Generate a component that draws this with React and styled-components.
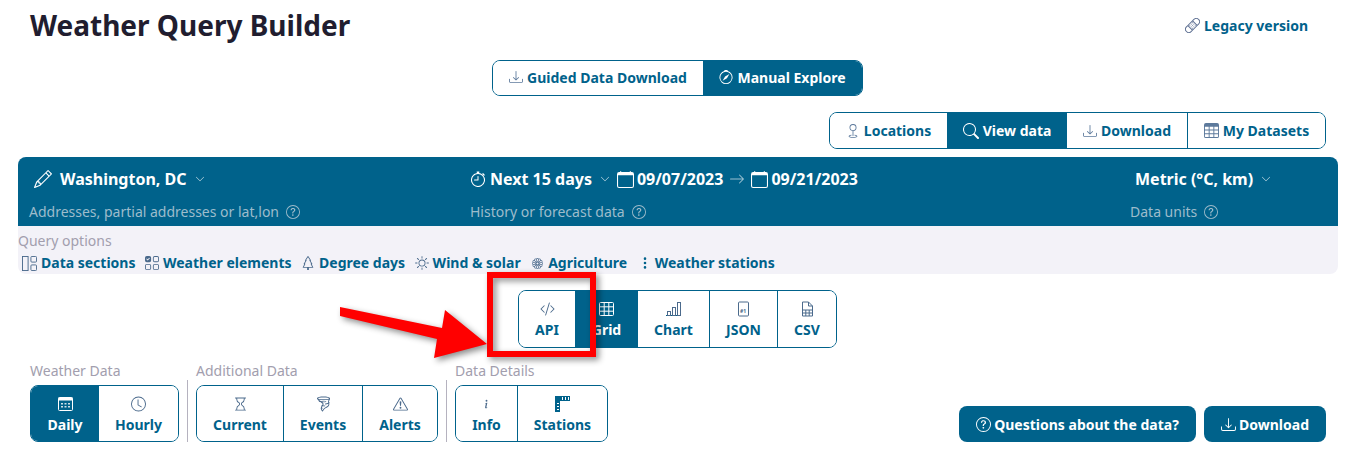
import React from "react";
import styled, { createGlobalStyle } from "styled-components";
import {
  BsBandaid, BsDownload, BsCompass, BsGeo, BsSearch, BsTable, BsPencil, BsChevronDown,
  BsStopwatch, BsCalendar, BsArrowRight, BsQuestionCircle, BsUiChecksGrid, BsTree, BsSun,
  BsFlower1, BsThreeDotsVertical, BsCodeSlash, BsClock, BsHourglass,
  BsTornado, BsExclamationTriangle, BsInfo,
} from "react-icons/bs";

const Global = createGlobalStyle`
  html, body { margin: 0; padding: 0; background: #fff; }
  body { font-family: "Noto Sans", "Open Sans", sans-serif; overflow: hidden; }
`;

const blue = "#00628b";
const iconBlue = "#4b6a8c";

const Page = styled.div`
  position: relative;
  width: 1368px;
  height: 453px;
  overflow: hidden;
  padding: 0 30px 0 18px;
  box-sizing: border-box;
`;
const Header = styled.header`
  display: flex;
  justify-content: space-between;
  align-items: center;
  height: 51px;
  padding: 0 30px 0 12px;
`;
const Title = styled.h1`
  margin: 0;
  font-size: 28px;
  line-height: 51px;
  font-weight: 700;
  color: #211d2f;
`;
const TextLink = styled.a`
  display: inline-flex;
  align-items: center;
  gap: 4px;
  font-size: 14px;
  font-weight: 700;
  color: ${blue};
  svg { font-size: 15px; color: #5d6f92; }
`;
const Row = styled.div`
  display: flex;
  justify-content: ${(p) => p.$justify || "center"};
  margin-top: ${(p) => p.$top || 0}px;
  padding-right: ${(p) => p.$right || 0}px;
`;
const Seg = styled.div`
  display: inline-flex;
  border: 1px solid ${blue};
  border-radius: 8px;
  overflow: hidden;
  background: #fff;
`;
const SegBtn = styled.button`
  display: inline-flex;
  align-items: center;
  justify-content: center;
  gap: 4px;
  box-sizing: border-box;
  width: ${(p) => p.$w}px;
  height: ${(p) => p.$h}px;
  padding: 0 0 ${(p) => p.$lift || 0}px;
  border: 0;
  border-left: ${(p) => (p.$div ? `1px solid ${blue}` : "0")};
  background: ${(p) => (p.$active ? blue : "#fff")};
  color: ${(p) => (p.$active ? "#fff" : blue)};
  font: 700 14px "Noto Sans", sans-serif;
  white-space: nowrap;
  svg { font-size: ${(p) => p.$icon || 14}px; color: ${(p) => (p.$active ? "#fff" : "#5d7a9c")}; }
`;
const Tile = styled.button`
  display: flex;
  flex-direction: column;
  align-items: center;
  gap: 3px;
  box-sizing: border-box;
  width: ${(p) => p.$w}px;
  height: ${(p) => p.$h || 55}px;
  padding: 10px 0 0;
  border: 0;
  border-left: ${(p) => (p.$div ? `1px solid ${blue}` : "0")};
  background: ${(p) => (p.$active ? blue : "#fff")};
  color: ${(p) => (p.$active ? "#fff" : blue)};
  font: 700 14px/20px "Noto Sans", sans-serif;
  svg { font-size: 15px; height: 16px; color: ${(p) => (p.$active ? "#fff" : iconBlue)}; }
`;
const Panel = styled.section`
  margin-top: 8px;
  border-radius: 8px;
  overflow: hidden;
  background: #f3f2f8;
`;
const PanelTop = styled.div`
  display: grid;
  grid-template-columns: 440px 660px 1fr;
  height: 69px;
  padding-left: 12px;
  background: ${blue};
  color: #fff;
  box-sizing: border-box;
`;
const Col = styled.div`
  display: flex;
  flex-direction: column;
`;
const Main = styled.div`
  display: flex;
  align-items: center;
  gap: 4px;
  height: 22px;
  margin-top: 11px;
  padding-left: ${(p) => p.$left || 0}px;
  font-size: 16px;
  font-weight: 700;
  white-space: nowrap;
  svg { font-size: 16px; flex: none; }
`;
const Pencil = styled(BsPencil)`
  && { font-size: 18px; margin: 0 4px 0 -1px; }
`;
const Chevron = styled(BsChevronDown)`
  && { font-size: 10px; margin: 0 ${(p) => p.$after || 0}px 0 4px; opacity: 0.85; }
`;
const Calendar = styled(BsCalendar)`
  && { font-size: 17px; margin-right: -1px; }
`;
const Arrow = styled(BsArrowRight)`
  && { opacity: 0.6; margin: 0 2px 0 2px; }
`;
const Hint = styled.div`
  display: flex;
  align-items: center;
  gap: 7px;
  margin: 12px 0 0 ${(p) => p.$shift || 0}px;
  font-size: 14px;
  line-height: 20px;
  color: #9dbccb;
  white-space: nowrap;
  svg { font-size: 14px; }
`;
const PanelBottom = styled.div`
  height: 48px;
  box-sizing: border-box;
  padding-top: 5px;
`;
const Muted = styled.div`
  font-size: 14px;
  line-height: 20px;
  color: #a29eae;
`;
const Options = styled.div`
  display: flex;
  gap: 9.5px;
  padding-left: 4px;
  margin-top: 2px;
`;
const Option = styled.span`
  display: inline-flex;
  align-items: center;
  gap: 4px;
  font-size: 14px;
  line-height: 20px;
  font-weight: 700;
  color: ${blue};
  white-space: nowrap;
  svg { font-size: 14px; color: ${iconBlue}; flex: none; }
`;
const Flower = styled(BsFlower1)`
  && { font-size: 11px; margin: 0 1px 0 2px; }
`;
const Dots = styled(BsThreeDotsVertical)`
  && { color: ${blue}; margin-left: 1px; margin-right: -1px; }
`;
const Bottom = styled.div`
  display: flex;
  align-items: flex-end;
  margin-top: 13px;
  padding: 0 12px;
`;
const Group = styled.div`
  display: flex;
  flex-direction: column;
`;
const Separator = styled.div`
  width: 1px;
  height: 62px;
  margin: 0 8px;
  background: #b5b2bf;
`;
const GroupLabel = styled(Muted)`
  margin-bottom: 4px;
`;
const Spacer = styled.div`flex: 1;`;
const Actions = styled.div`
  display: flex;
  gap: 8px;
`;
const Solid = styled.button`
  display: inline-flex;
  align-items: center;
  justify-content: center;
  gap: 3px;
  width: ${(p) => p.$w}px;
  height: 36px;
  padding: 0;
  border: 0;
  border-radius: 8px;
  background: ${blue};
  color: #fff;
  font: 700 14px "Noto Sans", sans-serif;
  svg { font-size: 15px; }
`;
const Callout = styled.svg`
  position: absolute;
  left: 0;
  top: 0;
  pointer-events: none;
  overflow: visible;
  filter: drop-shadow(3px 3px 3px rgba(0, 0, 0, 0.45));
`;

const SectionsIcon = () => (
  <svg width="15" height="15" viewBox="0 0 16 16" fill="none" stroke={iconBlue} strokeWidth="1">
    <rect x="0.5" y="0.5" width="6" height="15" />
    <rect x="9.5" y="0.5" width="6" height="6" rx="1" />
    <rect x="9.5" y="9.5" width="6" height="6" rx="1" />
  </svg>
);
const GridIcon = () => (
  <svg width="15" height="14" viewBox="0 0 15 14" fill="none" stroke="#fff">
    <rect x="0.5" y="0.5" width="14" height="13" rx="1" />
    <path d="M5.200 .5v13M9.800 .5v13M.5 4.800h14M.5 9.200h14" />
  </svg>
);
const ChartIcon = () => (
  <svg width="15" height="14" viewBox="0 0 15 14" fill="none" stroke={iconBlue}>
    <path d="M0 13.500h15" stroke={blue} />
    <rect x="1.500" y="9.500" width="3" height="4" />
    <rect x="6.500" y="5.500" width="3" height="8" />
    <rect x="11.500" y="0.500" width="3" height="13" />
  </svg>
);
const JsonIcon = () => (
  <svg width="11" height="15" viewBox="0 0 11 15" fill="none" stroke={iconBlue}>
    <rect x="0.500" y="0.500" width="10" height="14" rx="1" />
    <text x="2" y="11" fontSize="5" fontWeight="700" fill={iconBlue} stroke="none" fontFamily="Noto Sans">#1</text>
  </svg>
);
const CsvIcon = () => (
  <svg width="11" height="15" viewBox="0 0 11 15" fill="none" stroke={iconBlue}>
    <path d="M.500 .500h6l4 4v10h-10z" />
    <path d="M6.500 .500v4h4" />
    <path d="M.500 8.500h10M.500 11.500h10M3.800 8.500v6M7.200 8.500v6" />
  </svg>
);
const DailyIcon = () => (
  <svg width="15" height="14" viewBox="0 0 15 14">
    <rect x="0.500" y="0.500" width="14" height="13" rx="1" fill="none" stroke="#fff" />
    <rect x="0.500" y="0.500" width="14" height="3" fill="#fff" />
    <path d="M3 6h2v1.500h-2zM6.500 6h2v1.500h-2zM10 6h2v1.500h-2zM3 9h2v1.500h-2zM6.500 9h2v1.500h-2zM10 9h2v1.500h-2z" fill="#cfe0e8" />
  </svg>
);
const StationsIcon = () => (
  <svg width="15" height="16" viewBox="0 0 15 16">
    <path d="M0 0h15v5h-10v11h-5z" fill={blue} />
    <path d="M7 1h1v3h-1zM10 1h1v3h-1zM13 1h1v3h-1zM2 7h2v1h-2zM2 10h2v1h-2zM2 13h2v1h-2z" fill="#fff" />
  </svg>
);

export default function App() {
  return (
    <>
      <Global />
      <Page>
        <Header>
          <Title>Weather Query Builder</Title>
          <TextLink><BsBandaid />Legacy version</TextLink>
        </Header>
        <Row $top={9} $right={1}>
          <Seg>
            <SegBtn $w={210} $h={34} $lift={2}><BsDownload />Guided Data Download</SegBtn>
            <SegBtn $w={159} $h={34} $lift={2} $active><BsCompass />Manual Explore</SegBtn>
          </Seg>
        </Row>
        <Row $top={16} $justify="flex-end" $right={12}>
          <Seg>
            <SegBtn $w={117} $h={35}><BsGeo />Locations</SegBtn>
            <SegBtn $w={120} $h={35} $icon={16} $active><BsSearch />View data</SegBtn>
            <SegBtn $w={120} $h={35}><BsDownload />Download</SegBtn>
            <SegBtn $w={138} $h={35} $icon={15} $div><BsTable />My Datasets</SegBtn>
          </Seg>
        </Row>
        <Panel>
          <PanelTop>
            <Col>
              <Main $left={5}>
                <Pencil />Washington, DC<Chevron />
              </Main>
              <Hint $shift={-1}>Addresses, partial addresses or lat,lon <BsQuestionCircle /></Hint>
            </Col>
            <Col>
              <Main>
                <BsStopwatch />Next 15 days<Chevron $after={3} /><Calendar />09/07/2023
                <Arrow /><Calendar />09/21/2023
              </Main>
              <Hint>History or forecast data <BsQuestionCircle /></Hint>
            </Col>
            <Col>
              <Main $left={5}>Metric (°C, km)<Chevron /></Main>
              <Hint>Data units <BsQuestionCircle /></Hint>
            </Col>
          </PanelTop>
          <PanelBottom>
            <Muted>Query options</Muted>
            <Options>
              <Option><SectionsIcon />Data sections</Option>
              <Option><BsUiChecksGrid />Weather elements</Option>
              <Option><BsTree />Degree days</Option>
              <Option><BsSun />Wind &amp; solar</Option>
              <Option><Flower />Agriculture</Option>
              <Option><Dots />Weather stations</Option>
            </Options>
          </PanelBottom>
        </Panel>
        <Row $top={16} $right={1}>
          <Seg>
            <Tile $w={56} $h={56}><BsCodeSlash />API</Tile>
            <Tile $w={63} $h={56} $active><GridIcon />Grid</Tile>
            <Tile $w={71} $h={56}><ChartIcon />Chart</Tile>
            <Tile $w={68} $h={56} $div><JsonIcon />JSON</Tile>
            <Tile $w={59} $h={56} $div><CsvIcon />CSV</Tile>
          </Seg>
        </Row>
        <Bottom>
          <Group>
            <GroupLabel>Weather Data</GroupLabel>
            <Seg>
              <Tile $w={68} $active><DailyIcon />Daily</Tile>
              <Tile $w={79}><BsClock />Hourly</Tile>
            </Seg>
          </Group>
          <Separator />
          <Group>
            <GroupLabel>Additional Data</GroupLabel>
            <Seg>
              <Tile $w={86}><BsHourglass />Current</Tile>
              <Tile $w={79} $div><BsTornado />Events</Tile>
              <Tile $w={75} $div><BsExclamationTriangle />Alerts</Tile>
            </Seg>
          </Group>
          <Separator />
          <Group>
            <GroupLabel>Data Details</GroupLabel>
            <Seg>
              <Tile $w={61}><BsInfo />Info</Tile>
              <Tile $w={90} $div><StationsIcon />Stations</Tile>
            </Seg>
          </Group>
          <Spacer />
          <Actions>
            <Solid $w={237}><BsQuestionCircle />Questions about the data?</Solid>
            <Solid $w={122}><BsDownload />Download</Solid>
          </Actions>
        </Bottom>
        <Callout width="1368" height="453">
          <rect x="490" y="275" width="103" height="79" fill="none" stroke="#ff0000" strokeWidth="6" />
          <polygon points="340,307 340,316 437,339 434,358 487,344 445,310 442,328" fill="#ff0000" />
        </Callout>
      </Page>
    </>
  );
}
